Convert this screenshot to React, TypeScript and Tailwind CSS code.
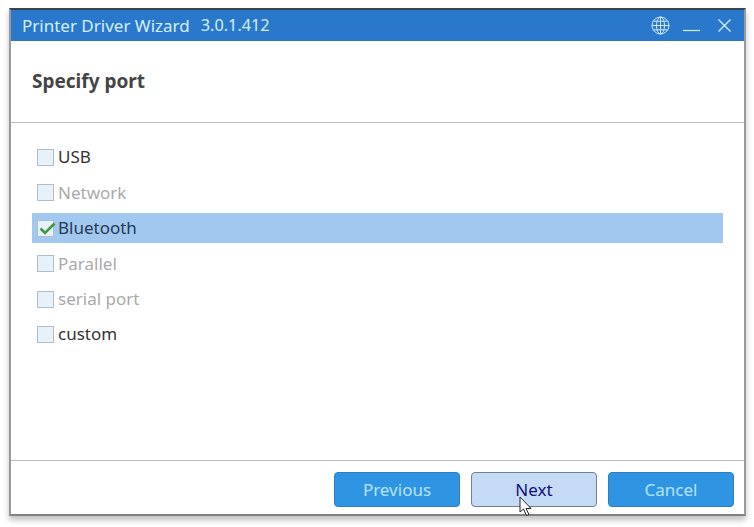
import React from "react";

const font = { fontFamily: '"Noto Sans", "Open Sans", sans-serif' };

function Row({ label, disabled, checked }: { label: string; disabled?: boolean; checked?: boolean }) {
  return (
    <div className={`flex items-center h-[30px] pl-[5px] ${checked ? "bg-[#a3c8f0]" : ""}`}>
      <div className="relative w-[17px] h-[17px] shrink-0 border border-[#aebfcc] bg-[#e6f1fa]">
        {checked && (
          <svg className="absolute left-[1px] top-[0px]" width="18" height="15" viewBox="0 0 18 15" fill="none">
            <path d="M1.5 7.5 L6 12 L15.5 2.5" stroke="#3f9a3f" strokeWidth="2.6" />
          </svg>
        )}
      </div>
      <span className={`ml-[4px] text-[17px] leading-[30px] ${disabled ? "text-[#a9a9a9]" : checked ? "text-[#223a55]" : "text-[#333333]"}`}>{label}</span>
    </div>
  );
}

function Btn({ label, hover }: { label: string; hover?: boolean }) {
  return (
    <div className={`w-[126px] h-[35px] flex items-center justify-center rounded-[4px] border text-[17px] ${hover ? "bg-[#c5daf5] border-[#6f8194] text-[#10107a]" : "bg-[#2f95e3] border-[#2a7fc4] text-[#b5e3fb]"}`}>
      {label}
    </div>
  );
}

export default function App() {
  return (
    <div className="w-[754px] h-[527px] bg-white pt-[8px] pl-[9px] overflow-hidden" style={font}>
      <div className="relative w-[737px] h-[508px] flex flex-col bg-white border-x-2 border-b-2 border-t-2 border-x-[#9a9a9a] border-b-[#808080] border-t-[#3c4048] shadow-[0_4px_6px_rgba(0,0,0,0.25)]">
        <div className="h-[31px] shrink-0 bg-[#2a78cc] flex items-center pl-[11px] pr-[12px] text-[#d3eefc]">
          <span className="text-[17px]">Printer Driver Wizard</span>
          <span className="ml-[11px] text-[16.3px]">3.0.1.412</span>
          <div className="ml-auto flex items-center">
            <svg width="19" height="19" viewBox="0 0 19 19" fill="none" stroke="#cfe8fb" strokeWidth="1">
              <circle cx="9.5" cy="9.5" r="8.5" />
              <ellipse cx="9.5" cy="9.5" rx="4" ry="8.5" />
              <path d="M9.5 1V18M1 9.5H18M2.2 5.2H16.8M2.2 13.8H16.8" />
            </svg>
            <svg className="ml-[13px]" width="17" height="17" viewBox="0 0 17 17" fill="none" stroke="#d3eefc" strokeWidth="1.2">
              <path d="M0 13.5H17" />
            </svg>
            <svg className="ml-[17px]" width="15" height="15" viewBox="0 0 15 15" fill="none" stroke="#d3eefc" strokeWidth="1.3">
              <path d="M1.5 1.5L13.5 13.5M13.5 1.5L1.5 13.5" />
            </svg>
          </div>
        </div>
        <div className="h-[82px] shrink-0 flex items-center pl-[21px] border-b border-[#bdbdbd]">
          <span className="text-[19px] font-bold text-[#444444]">Specify port</span>
        </div>
        <div className="h-[338px] shrink-0 border-b border-[#bdbdbd] pt-[19.45px] pl-[21px] pr-[21px] flex flex-col gap-[5.4px]">
          <Row label="USB" />
          <Row label="Network" disabled />
          <Row label="Bluetooth" checked />
          <Row label="Parallel" disabled />
          <Row label="serial port" disabled />
          <Row label="custom" />
        </div>
        <div className="flex-1 flex items-start justify-end gap-[11px] pt-[11px] pr-[10px]">
          <Btn label="Previous" />
          <Btn label="Next" hover />
          <Btn label="Cancel" />
        </div>
        <svg className="absolute left-[508px] top-[486px]" width="15" height="21" viewBox="0 0 15 21">
          <path d="M1 1V16L4.5 13L7.5 19.5L10 18.5L7 12.5H12Z" fill="#ffffff" stroke="#222222" strokeWidth="1" />
        </svg>
      </div>
    </div>
  );
}
